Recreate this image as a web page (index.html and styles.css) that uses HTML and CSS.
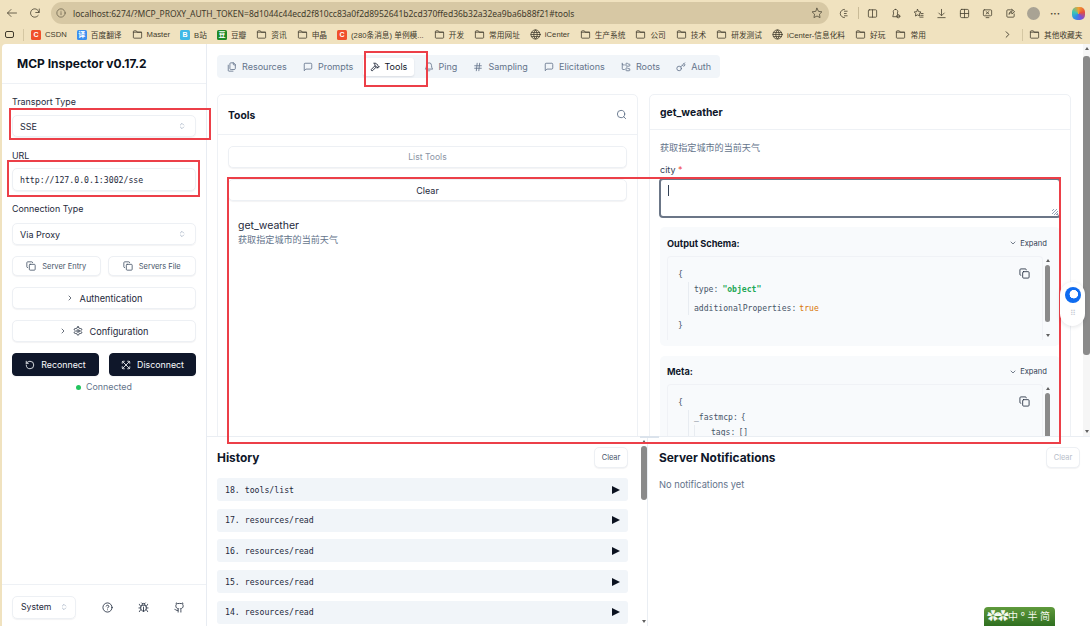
FILE: index.html
```html
<!DOCTYPE html>
<html lang="en">
<head>
<meta charset="utf-8">
<title>MCP Inspector</title>
<link rel="stylesheet" href="styles.css">
</head>
<body>
<svg class="sprite" width="0" height="0" aria-hidden="true">
  <defs>
    <symbol id="copy" viewBox="0 0 24 24"><rect x="8" y="8" width="14" height="14" rx="2"/><path d="M4 16c-1.1 0-2-.9-2-2V4c0-1.1.9-2 2-2h10c1.100 0 2 .9 2 2"/></symbol>
    <symbol id="files" viewBox="0 0 24 24"><path d="M20 7h-3a2 2 0 0 1-2-2V2"/><path d="M9 18a2 2 0 0 1-2-2V4a2 2 0 0 1 2-2h7l4 4v10a2 2 0 0 1-2 2Z"/><path d="M3 7.600v12.800A1.600 1.600 0 0 0 4.600 22h9.800"/></symbol>
    <symbol id="msg" viewBox="0 0 24 24"><path d="M21 15a2 2 0 0 1-2 2H7l-4 4V5a2 2 0 0 1 2-2h14a2 2 0 0 1 2 2z"/></symbol>
    <symbol id="hammer" viewBox="0 0 24 24"><path d="m15 12-8.500 8.500c-.83.83-2.170.83-3 0a2.120 2.120 0 0 1 0-3L12 9"/><path d="M17.640 15 22 10.640"/><path d="m20.910 11.700-1.250-1.250c-.6-.6-.93-1.400-.93-2.250v-.86L16.010 4.600a5.560 5.560 0 0 0-3.940-1.640H9l.92.82A6.180 6.180 0 0 1 12 8.400v1.560l2 2h2.470l2.260 1.910"/></symbol>
    <symbol id="bell" viewBox="0 0 24 24"><path d="M6 8a6 6 0 0 1 12 0c0 7 3 9 3 9H3s3-2 3-9"/><path d="M10.300 21a1.940 1.940 0 0 0 3.400 0"/></symbol>
    <symbol id="hash" viewBox="0 0 24 24"><path d="M4 9h16M4 15h16M10 3 8 21M16 3l-2 18"/></symbol>
    <symbol id="tree" viewBox="0 0 24 24"><path d="M20 10a1 1 0 0 0 1-1V6a1 1 0 0 0-1-1h-2.500a1 1 0 0 1-.8-.4l-.9-1.200A1 1 0 0 0 15 3h-2a1 1 0 0 0-1 1v5a1 1 0 0 0 1 1Z"/><path d="M20 21a1 1 0 0 0 1-1v-3a1 1 0 0 0-1-1h-2.900a1 1 0 0 1-.88-.55l-.42-.85a1 1 0 0 0-.92-.6H13a1 1 0 0 0-1 1v5a1 1 0 0 0 1 1Z"/><path d="M3 5a2 2 0 0 0 2 2h3"/><path d="M3 3v13a2 2 0 0 0 2 2h3"/></symbol>
    <symbol id="key" viewBox="0 0 24 24"><path d="m15.500 7.500 3 3L22 7l-3-3"/><path d="m21 2-9.600 9.600"/><circle cx="7.500" cy="15.500" r="5.500"/></symbol>
    <symbol id="search" viewBox="0 0 24 24"><circle cx="11" cy="11" r="8"/><path d="m21 21-4.300-4.300"/></symbol>
    <symbol id="updown" viewBox="0 0 24 24"><path d="m7 15 5 5 5-5"/><path d="m7 9 5-5 5 5"/></symbol>
    <symbol id="cright" viewBox="0 0 24 24"><path d="m9 18 6-6-6-6"/></symbol>
    <symbol id="cdown" viewBox="0 0 24 24"><path d="m6 9 6 6 6-6"/></symbol>
    <symbol id="gear" viewBox="0 0 24 24"><path d="M12.220 2h-.44a2 2 0 0 0-2 2v.18a2 2 0 0 1-1 1.730l-.43.25a2 2 0 0 1-2 0l-.15-.08a2 2 0 0 0-2.730.73l-.22.38a2 2 0 0 0 .73 2.730l.15.1a2 2 0 0 1 1 1.720v.51a2 2 0 0 1-1 1.740l-.15.09a2 2 0 0 0-.73 2.730l.22.38a2 2 0 0 0 2.730.73l.15-.08a2 2 0 0 1 2 0l.43.25a2 2 0 0 1 1 1.730V20a2 2 0 0 0 2 2h.44a2 2 0 0 0 2-2v-.18a2 2 0 0 1 1-1.730l.43-.25a2 2 0 0 1 2 0l.15.08a2 2 0 0 0 2.730-.73l.22-.39a2 2 0 0 0-.73-2.730l-.15-.08a2 2 0 0 1-1-1.740v-.5a2 2 0 0 1 1-1.740l.15-.09a2 2 0 0 0 .73-2.730l-.22-.38a2 2 0 0 0-2.730-.73l-.15.08a2 2 0 0 1-2 0l-.43-.25a2 2 0 0 1-1-1.730V4a2 2 0 0 0-2-2z"/><circle cx="12" cy="12" r="3"/></symbol>
    <symbol id="ccw" viewBox="0 0 24 24"><path d="M3 12a9 9 0 1 0 9-9 9.750 9.750 0 0 0-6.740 2.740L3 8"/><path d="M3 3v5h5"/></symbol>
    <symbol id="unplug" viewBox="0 0 24 24"><path d="M4 4l16 16M20 4 4 20"/><path d="M8 3H5a2 2 0 0 0-2 2v3M16 3h3a2 2 0 0 1 2 2v3M8 21H5a2 2 0 0 1-2-2v-3M16 21h3a2 2 0 0 0 2-2v-3"/></symbol>
    <symbol id="help" viewBox="0 0 24 24"><circle cx="12" cy="12" r="10"/><path d="M9.090 9a3 3 0 0 1 5.830 1c0 2-3 3-3 3"/><path d="M12 17h.01"/></symbol>
    <symbol id="bug" viewBox="0 0 24 24"><path d="m8 2 1.880 1.880"/><path d="M14.120 3.880 16 2"/><path d="M9 7.130v-1a3 3 0 1 1 6 0v1"/><path d="M12 20c-3.300 0-6-2.700-6-6v-3a4 4 0 0 1 4-4h4a4 4 0 0 1 4 4v3c0 3.300-2.700 6-6 6"/><path d="M12 20v-9"/><path d="M6.530 9C4.600 8.800 3 7.100 3 5"/><path d="M6 13H2"/><path d="M3 21c0-2.100 1.700-3.900 3.800-4"/><path d="M20.970 5c0 2.100-1.600 3.800-3.500 4"/><path d="M22 13h-4"/><path d="M17.200 17c2.100.1 3.800 1.900 3.800 4"/></symbol>
    <symbol id="github" viewBox="0 0 24 24"><path d="M15 22v-4a4.800 4.800 0 0 0-1-3.500c3 0 6-2 6-5.500.08-1.250-.27-2.480-1-3.500.28-1.150.28-2.350 0-3.500 0 0-1 0-3 1.500-2.640-.5-5.360-.5-8 0C6 2 5 2 5 2c-.3 1.150-.3 2.350 0 3.500A5.400 5.400 0 0 0 4 9c0 3.500 3 5.500 6 5.500-.39.49-.68 1.050-.85 1.650-.17.6-.22 1.230-.15 1.850v4"/><path d="M9 18c-4.510 2-5-2-7-2"/></symbol>
    <symbol id="folder" viewBox="0 0 24 24"><path d="M3 7V5.500A1.500 1.500 0 0 1 4.500 4h5l2 3h8A1.500 1.500 0 0 1 21 8.500v10a1.500 1.500 0 0 1-1.500 1.500h-15A1.500 1.500 0 0 1 3 18.500V7h18"/></symbol>
    <symbol id="globe" viewBox="0 0 24 24"><circle cx="12" cy="12" r="10"/><path d="M12 2a14.500 14.500 0 0 0 0 20 14.500 14.500 0 0 0 0-20"/><path d="M2 12h20M3.500 7.500h17M3.500 16.500h17"/></symbol>
    <symbol id="back" viewBox="0 0 24 24"><path d="M21 12H3M10 5l-7 7 7 7"/></symbol>
    <symbol id="reload" viewBox="0 0 24 24"><path d="M20 11a8.500 8.500 0 1 0-1.500 6"/><path d="M20.500 4v7h-7"/></symbol>
    <symbol id="info" viewBox="0 0 24 24"><circle cx="12" cy="12" r="10"/><path d="M12 16v-5M12 8h.01"/></symbol>
    <symbol id="star" viewBox="0 0 24 24"><path d="m12 2.500 3 6.200 6.800 1-4.900 4.700 1.200 6.800-6.100-3.200-6.100 3.200 1.200-6.800-4.900-4.700 6.800-1z"/></symbol>
    <symbol id="split" viewBox="0 0 24 24"><rect x="3" y="4" width="18" height="16" rx="2"/><path d="M12 4v16"/></symbol>
    <symbol id="down" viewBox="0 0 24 24"><path d="M12 3v13M6 11l6 6 6-6M4 21h16"/></symbol>
    <symbol id="grid" viewBox="0 0 24 24"><rect x="3" y="3" width="18" height="18" rx="3"/><path d="M12 3v18M3 12h18"/></symbol>
    <symbol id="shot" viewBox="0 0 24 24"><rect x="3" y="4" width="18" height="13" rx="2"/><path d="M9 21h6M9 8l6 5M15 8l-6 5"/></symbol>
    <symbol id="share" viewBox="0 0 24 24"><path d="M12 4H6a2 2 0 0 0-2 2v12a2 2 0 0 0 2 2h12a2 2 0 0 0 2-2v-5"/><path d="M15 3l6 5-6 5V10c-3 0-5 1-6 4 0-4 2-7 6-7z"/></symbol>
    <symbol id="ext" viewBox="0 0 24 24"><path d="M14 3a9 9 0 1 0 0 18M14 7h6M14 12h4M14 17h6"/></symbol>
    <symbol id="favs" viewBox="0 0 24 24"><path d="m10 3 2.300 5 5.200.7-3.800 3.600 1 5.200-4.700-2.500-4.700 2.500 1-5.200L2.500 8.700 7.700 8z"/><path d="M17 12h5M17 16h5M15 20h7"/></symbol>
    <symbol id="lock" viewBox="0 0 24 24"><path d="M12 3a5 5 0 0 1 4 8l2 8H6l2-8a5 5 0 0 1 4-8z"/><circle cx="18" cy="18" r="3.500"/></symbol>
  </defs>
</svg>

<header class="toolbar">
  <svg class="tb-nav"><use href="#back"/></svg>
  <svg class="tb-nav"><use href="#reload"/></svg>
  <div class="address">
    <svg class="addr-info"><use href="#info"/></svg>
    <span class="addr-text">localhost:6274/?MCP_PROXY_AUTH_TOKEN=8d1044c44ecd2f810cc83a0f2d8952641b2cd370ffed36b32a32ea9ba6b88f21#tools</span>
    <svg class="addr-star"><use href="#star"/></svg>
  </div>
  <div class="tb-icons">
    <svg class="tb-ic"><use href="#ext"/></svg>
    <i class="tb-sep"></i>
    <svg class="tb-ic"><use href="#split"/></svg>
    <svg class="tb-ic"><use href="#lock"/></svg>
    <svg class="tb-ic"><use href="#favs"/></svg>
    <svg class="tb-ic"><use href="#down"/></svg>
    <svg class="tb-ic"><use href="#grid"/></svg>
    <svg class="tb-ic"><use href="#shot"/></svg>
    <svg class="tb-ic"><use href="#share"/></svg>
    <span class="avatar"></span>
    <span class="dots">···</span>
    <span class="copilot"></span>
  </div>
</header>

<nav class="bookmarks">
  <span class="bm-first"></span>
  <i class="bm-sep"></i>
  <a class="bm"><b class="fav fav-red">C</b>CSDN</a>
  <a class="bm"><b class="fav fav-blue">译</b>百度翻译</a>
  <a class="bm"><svg class="bm-ic"><use href="#folder"/></svg>Master</a>
  <a class="bm"><b class="fav fav-cyan">B</b>B站</a>
  <a class="bm"><b class="fav fav-green">豆</b>豆瓣</a>
  <a class="bm"><svg class="bm-ic"><use href="#folder"/></svg>资讯</a>
  <a class="bm"><svg class="bm-ic"><use href="#folder"/></svg>申晶</a>
  <a class="bm bm-wide"><b class="fav fav-red">C</b>(280条消息) 单例模...</a>
  <a class="bm"><svg class="bm-ic"><use href="#folder"/></svg>开发</a>
  <a class="bm"><svg class="bm-ic"><use href="#folder"/></svg>常用网址</a>
  <a class="bm"><svg class="bm-ic"><use href="#globe"/></svg>iCenter</a>
  <a class="bm"><svg class="bm-ic"><use href="#folder"/></svg>生产系统</a>
  <a class="bm"><svg class="bm-ic"><use href="#folder"/></svg>公司</a>
  <a class="bm"><svg class="bm-ic"><use href="#folder"/></svg>技术</a>
  <a class="bm"><svg class="bm-ic"><use href="#folder"/></svg>研发测试</a>
  <a class="bm"><svg class="bm-ic"><use href="#globe"/></svg>iCenter-信息化料</a>
  <a class="bm"><svg class="bm-ic"><use href="#folder"/></svg>好玩</a>
  <a class="bm"><svg class="bm-ic"><use href="#folder"/></svg>常用</a>
  <span class="bm-end">
    <svg class="bm-more"><use href="#cright"/></svg>
    <i class="bm-sep"></i>
    <a class="bm"><svg class="bm-ic"><use href="#folder"/></svg>其他收藏夹</a>
  </span>
</nav>

<div class="app">
  <aside class="sidebar">
    <div class="side-head"><h1>MCP Inspector v0.17.2</h1></div>
    <div class="side-body">
      <div class="field f1">
        <label>Transport Type</label>
        <div class="control"><span>SSE</span><svg class="updown"><use href="#updown"/></svg></div>
      </div>
      <div class="field f2">
        <label>URL</label>
        <div class="control mono"><span>http://127.0.0.1:3002/sse</span></div>
      </div>
      <div class="field f3">
        <label>Connection Type</label>
        <div class="control"><span>Via Proxy</span><svg class="updown"><use href="#updown"/></svg></div>
      </div>
      <div class="two">
        <button class="btn sm"><svg class="ic"><use href="#copy"/></svg>Server Entry</button>
        <button class="btn sm"><svg class="ic"><use href="#copy"/></svg>Servers File</button>
      </div>
      <button class="btn wide"><svg class="ic chev"><use href="#cright"/></svg>Authentication</button>
      <button class="btn wide tall"><svg class="ic chev"><use href="#cright"/></svg><svg class="ic"><use href="#gear"/></svg>Configuration</button>
      <div class="two dark-row">
        <button class="btn dark"><svg class="ic"><use href="#ccw"/></svg>Reconnect</button>
        <button class="btn dark"><svg class="ic"><use href="#unplug"/></svg>Disconnect</button>
      </div>
      <div class="status"><i class="dot"></i>Connected</div>
    </div>
    <div class="side-foot">
      <div class="theme"><span>System</span><svg class="updown"><use href="#updown"/></svg></div>
      <svg class="foot-ic"><use href="#help"/></svg>
      <svg class="foot-ic"><use href="#bug"/></svg>
      <svg class="foot-ic"><use href="#github"/></svg>
    </div>
  </aside>

  <main class="main">
    <section class="upper">
      <div class="upper-content">
        <div class="tabs">
          <a class="tab"><svg class="ic"><use href="#files"/></svg>Resources</a>
          <a class="tab"><svg class="ic"><use href="#msg"/></svg>Prompts</a>
          <a class="tab active"><svg class="ic"><use href="#hammer"/></svg>Tools</a>
          <a class="tab"><svg class="ic"><use href="#bell"/></svg>Ping</a>
          <a class="tab"><svg class="ic"><use href="#hash"/></svg>Sampling</a>
          <a class="tab"><svg class="ic"><use href="#msg"/></svg>Elicitations</a>
          <a class="tab"><svg class="ic"><use href="#tree"/></svg>Roots</a>
          <a class="tab"><svg class="ic"><use href="#key"/></svg>Auth</a>
        </div>
        <div class="cols">
          <div class="card tools-card">
            <div class="card-head tools-head"><h2>Tools</h2><svg class="search"><use href="#search"/></svg></div>
            <div class="tools-body">
              <button class="btn block muted">List Tools</button>
              <button class="btn block">Clear</button>
              <div class="tool-item">
                <div class="tool-name">get_weather</div>
                <div class="tool-desc">获取指定城市的当前天气</div>
              </div>
            </div>
          </div>
          <div class="card detail-card">
            <div class="card-head detail-head"><h2>get_weather</h2></div>
            <div class="detail-body">
              <p class="detail-desc">获取指定城市的当前天气</p>
              <div class="city">city <em>*</em></div>
              <div class="textarea"><i class="caret"></i><span class="grip"></span></div>
              <div class="schema">
                <div class="schema-head"><strong>Output Schema:</strong><span class="expand"><svg class="ic"><use href="#cdown"/></svg>Expand</span></div>
                <div class="code-wrap">
                  <div class="code">
                    <svg class="code-copy"><use href="#copy"/></svg>
                    <div class="ln">{</div>
                    <div class="guide">
                      <div class="ln ln-a">type:<span class="str">"object"</span></div>
                      <div class="ln ln-b">additionalProperties:<span class="bool">true</span></div>
                    </div>
                    <div class="ln ln-end">}</div>
                  </div>
                  <div class="sbar"><i class="up"></i><i class="thumb t1"></i><i class="dn"></i></div>
                </div>
              </div>
              <div class="schema meta">
                <div class="schema-head"><strong>Meta:</strong><span class="expand"><svg class="ic"><use href="#cdown"/></svg>Expand</span></div>
                <div class="code-wrap">
                  <div class="code">
                    <svg class="code-copy"><use href="#copy"/></svg>
                    <div class="ln">{</div>
                    <div class="guide">
                      <div class="ln ln-a">_fastmcp:<span class="pun">{</span></div>
                      <div class="guide guide2"><div class="ln ln-c">tags:<span class="pun">[]</span></div></div>
                    </div>
                  </div>
                  <div class="sbar"><i class="up"></i><i class="thumb t2"></i></div>
                </div>
              </div>
            </div>
          </div>
        </div>
      </div>
      <div class="sbar page-bar"><i class="up"></i><i class="thumb t3"></i><i class="dn"></i></div>
    </section>

    <section class="lower">
      <i class="splitter"></i>
      <div class="history">
        <div class="lower-head"><h3>History</h3><button class="btn clear">Clear</button></div>
        <div class="hist-row"><span>18. tools/list</span><i class="play"></i></div>
        <div class="hist-row"><span>17. resources/read</span><i class="play"></i></div>
        <div class="hist-row"><span>16. resources/read</span><i class="play"></i></div>
        <div class="hist-row"><span>15. resources/read</span><i class="play"></i></div>
        <div class="hist-row"><span>14. resources/read</span><i class="play"></i></div>
      </div>
      <div class="sbar hist-bar"><i class="up"></i><i class="thumb t4"></i><i class="dn"></i></div>
      <div class="notes">
        <div class="lower-head"><h3>Server Notifications</h3><button class="btn clear faded">Clear</button></div>
        <p class="empty">No notifications yet</p>
      </div>
    </section>
  </main>
</div>

<div class="red r-tab"></div>
<div class="red r-sse"></div>
<div class="red r-url"></div>
<div class="red r-main"></div>

<div class="float-widget"><span class="fw-logo"></span><span class="fw-grip">⠿</span></div>
<div class="ime"><span class="ime-flower">✿✿</span><span class="ime-text">中°半简</span></div>
</body>
</html>
```
FILE: styles.css
```css
* { box-sizing: border-box; }
html, body { margin: 0; height: 626px; overflow: hidden; }
body {
  position: relative;
  width: 1090px;
  background: #f0e2bf;
  font-family: Inter, "Noto Sans CJK SC", sans-serif;
  color: #0f172a;
  font-size: 10px;
}
svg { fill: none; stroke: currentColor; stroke-width: 2; stroke-linecap: round; stroke-linejoin: round; }
.sprite { position: absolute; }
h1, h2, h3, p { margin: 0; }
button { font-family: inherit; }

/* browser chrome */
.toolbar { height: 25px; display: flex; align-items: center; padding: 1px 0 0 6px; color: #4a4433; }
.tb-nav { width: 12px; height: 12px; margin-right: 11px; stroke-width: 1.6; }
.address {
  width: 778px; height: 22px; margin-left: -1px; border-radius: 11px; background: #d7c8a4;
  display: flex; align-items: center; padding-left: 5px;
}
.addr-info { width: 10px; height: 10px; stroke-width: 1.6; color: #5a5340; }
.addr-text { margin-left: 7px; font: 8.5px "Noto Sans", sans-serif; color: #3f3a2c; white-space: nowrap; }
.addr-star { width: 12px; height: 12px; margin-left: auto; margin-right: 6px; stroke-width: 1.5; }
.tb-icons { display: flex; align-items: center; flex: 1; padding-left: 9px; }
.tb-ic { width: 11px; height: 11px; margin-right: 12px; stroke-width: 1.8; flex: none; }
.tb-sep { width: 1px; height: 12px; background: #c9bb97; margin: 0 8px 0 -3px; }
.avatar { width: 13px; height: 13px; border-radius: 50%; background: #a9a394; margin-left: -1px; }
.dots { margin-left: 10px; font-weight: 700; font-size: 10px; }
.copilot {
  width: 13px; height: 13px; margin-left: 12px; border-radius: 5px;
  background: conic-gradient(#f0a030, #e8503a, #7a4fd8, #2f8be8, #3cc8b0, #f0a030);
}
.bookmarks {
  height: 19px; display: flex; align-items: center; padding-left: 5px; gap: 10px;
  font: 7.7px "Liberation Sans", "Noto Sans CJK SC", sans-serif; color: #3f3a2c; white-space: nowrap;
}
.bm-first { width: 9px; height: 7px; border: 1.5px solid #3f3a2c; border-radius: 2px; margin-right: -1px; }
.bm-sep { width: 1px; height: 12px; background: #d5c7a3; margin-right: -3px; }
.bm { display: inline-flex; align-items: center; gap: 4px; }
.fav {
  width: 10px; height: 10px; border-radius: 1.5px; font-size: 7px; line-height: 10px; text-align: center;
  color: #fff; font-weight: 700; font-style: normal; flex: none;
}
.fav-red { background: #f0502c; }
.fav-blue { background: #3b8ff0; }
.fav-cyan { background: #3fb8e6; }
.fav-green { background: #1f8a28; }
.bm-ic { width: 11px; height: 11px; stroke-width: 1.7; flex: none; }
.bm-end { position: absolute; left: 1002px; display: flex; align-items: center; gap: 9px; }
.bm-more { width: 11px; height: 11px; }

/* app */
.app { height: 582px; margin-left: 2px; display: flex; background: #fff; border-top-left-radius: 4px; }
.sidebar { width: 205px; border-right: 1px solid #e8ecf2; display: flex; flex-direction: column; flex: none; }
.side-head { height: 40px; border-bottom: 1px solid #eef1f5; padding: 12px 0 0 15px; }
h1 { font-size: 12px; font-weight: 700; line-height: 15px; color: #0b1220; }
.side-body { padding: 12px 10px 0; flex: 1; }
label { display: block; font-size: 8.9px; line-height: 12px; color: #1e293b; margin-bottom: 7px; }
.control {
  height: 22px; border: 1px solid #edf0f4; border-radius: 5px; box-shadow: 0 1px 1px rgba(15,23,42,.05);
  display: flex; align-items: center; justify-content: space-between; padding: 0 9px 0 7px;
  font-size: 9px; color: #1e293b;
}
.control.mono { height: 23px; font: 8.2px "DejaVu Sans Mono", monospace; }
.updown { width: 8px; height: 8px; color: #94a3b8; }
.f1 { margin-bottom: 13px; }
.f2 { margin-bottom: 12px; }
.f2 label { margin-bottom: 6px; }
.f3 { margin-bottom: 11px; }
.f3 label { margin-bottom: 8px; }
.btn {
  background: #fff; border: 1px solid #edf0f4; border-radius: 5px; box-shadow: 0 1px 1px rgba(15,23,42,.05);
  display: flex; align-items: center; justify-content: center; gap: 5px; padding: 0; color: #1e293b;
  font-size: 9.2px;
}
.ic { width: 10px; height: 10px; flex: none; }
.two { display: flex; gap: 7px; margin-bottom: 11px; }
.btn.sm { flex: 1; height: 20px; font-size: 7.5px; color: #475569; gap: 6px; }
.btn.wide { width: 100%; height: 22px; margin-bottom: 11px; gap: 6px; }
.ic.chev { width: 8px; height: 8px; }
.dark-row { gap: 10px; margin-bottom: 5px; }
.btn.dark {
  flex: 1; height: 23px; background: #0f172a; border-color: #0f172a; color: #f8fafc; gap: 6px; border-radius: 4px;
  font-size: 8.8px;
}
.btn.dark .ic { width: 10px; height: 10px; }
.status { display: flex; justify-content: center; align-items: center; gap: 5px; font-size: 8.9px; line-height: 12px; color: #64748b; }
.dot { width: 5px; height: 5px; border-radius: 50%; background: #22c55e; }
.side-foot { height: 42px; border-top: 1px solid #eef1f5; display: flex; align-items: center; padding: 3px 0 0 10px; color: #1e293b; }
.theme {
  width: 64px; height: 23px; border: 1px solid #edf0f4; border-radius: 5px; box-shadow: 0 1px 1px rgba(15,23,42,.05);
  display: flex; align-items: center; justify-content: space-between; padding: 0 7px 0 8px; font-size: 8.7px;
  margin-right: 26px; flex: none;
}
.foot-ic { width: 11px; height: 11px; margin-right: 25px; stroke-width: 1.8; flex: none; }

.main { flex: 1; min-width: 0; display: flex; flex-direction: column; }
.upper { height: 392px; display: flex; overflow: hidden; }
.upper-content { width: 876px; padding: 11px 0 0 10px; flex: none; }
.tabs {
  width: 503px; height: 23px; background: #f1f5f9; border-radius: 4px; display: flex; align-items: center;
  padding: 0 2px 0 3px; justify-content: space-between; color: #64748b; font-size: 9px;
}
.tab { display: flex; align-items: center; gap: 5px; height: 18px; padding: 0 7px; border-radius: 3px; }
.tab .ic { width: 10px; height: 10px; }
.tab.active { background: #fff; color: #0f172a; box-shadow: 0 1px 2px rgba(15,23,42,.1); }
.cols { display: flex; gap: 11px; margin-top: 16px; }
.card { border: 1px solid #eef1f5; border-radius: 5px; height: 350px; flex: none; overflow: hidden; }
.tools-card { width: 421px; }
.detail-card { width: 422px; }
.card-head { display: flex; align-items: center; justify-content: space-between; border-bottom: 1px solid #eef1f5; padding: 0 10px; }
.tools-head { height: 40px; }
.detail-head { height: 35px; }
h2 { font-size: 10.3px; font-weight: 700; color: #0f172a; }
.search { width: 11px; height: 11px; color: #64748b; }
.tools-body { padding: 11px 10px; }
.btn.block { width: 100%; height: 22px; margin-bottom: 11px; font-size: 9px; }
.btn.muted { color: #8b95a5; font-size: 8.6px; }
.tool-item { padding: 6px 10px; }
.tool-name { font-size: 10.5px; line-height: 15px; color: #1e293b; }
.tool-desc { font-size: 9.1px; line-height: 13px; color: #64748b; }
.detail-body { padding: 11px 10px; }
.detail-desc { font-size: 9.1px; line-height: 13px; color: #64748b; }
.city { font-size: 9px; line-height: 12px; margin-top: 10px; color: #334155; }
.city em { color: #ef4444; font-style: normal; }
.textarea {
  position: relative; height: 40px; margin: 2px -1px 0; border: 2px solid #6b7687; border-radius: 4px; padding: 5px 7px;
}
.caret { display: block; width: 1px; height: 11px; background: #334155; }
.grip {
  position: absolute; right: 1px; bottom: 1px; width: 6px; height: 6px;
  background: repeating-linear-gradient(135deg, transparent 0 1px, #94a3b8 1px 2px);
}
.schema { background: #f8fafc; border-radius: 5px; margin-top: 9px; height: 119px; padding: 0 8px 0 7px; }
.meta { margin-top: 10px; height: 100px; }
.schema-head { height: 29px; display: flex; align-items: center; justify-content: space-between; font-size: 9.2px; padding-top: 3px; }
.meta .schema-head { height: 28px; }
.schema-head strong { color: #0f172a; font-weight: 700; }
.expand { display: inline-flex; align-items: center; gap: 3px; font-size: 7.6px; color: #334155; padding-right: 5px; }
.expand .ic { width: 8px; height: 8px; }
.code-wrap { display: flex; gap: 1px; height: 84px; }
.code {
  position: relative; width: 376px; border: 1px solid #f0f2f6; border-bottom: 0; border-radius: 4px 4px 0 0; padding: 10px 0 0 10px;
  font: 8.1px/14px "DejaVu Sans Mono", monospace; color: #475569;
}
.code-copy { position: absolute; right: 12px; top: 11px; width: 11px; height: 11px; color: #1e293b; stroke-width: 1.8; }
.guide { margin-left: 10px; padding-left: 5px; border-left: 1px solid #e8ecf1; }
.ln-a { margin-top: 1px; }
.ln-b { margin-top: 5px; }
.ln-c { margin-top: 1px; }
.ln-end { margin-top: 3px; }
.guide2 { margin-left: 0; padding-left: 16px; }
.str { color: #22a855; font-weight: 700; margin-left: 4px; }
.bool { color: #d97706; margin-left: 3px; }
.pun { margin-left: 3px; }
.sbar { display: flex; flex-direction: column; align-items: center; width: 7px; flex: none; }
.sbar .up { width: 0; height: 0; border: 2.5px solid transparent; border-top: 0; border-bottom: 3px solid #606060; margin: 3px 0 3px; }
.sbar .dn { width: 0; height: 0; border: 2.5px solid transparent; border-bottom: 0; border-top: 3px solid #606060; margin-top: auto; margin-bottom: 3px; }
.thumb { width: 5px; background: #8a8a8a; border-radius: 3px; }
.t1 { height: 57px; }
.t2 { height: 50px; }
.t3 { width: 7px; height: 299px; margin-top: 3px; }
.t4 { height: 54px; width: 6px; }
.page-bar { background: #f6f6f6; }
.lower { position: relative; height: 190px; display: flex; border-top: 1px solid #eaeef3; }
.splitter { position: absolute; left: 433px; top: -1px; width: 19px; height: 2px; background: #dbe3ec; }
.history { width: 433px; padding-left: 10px; flex: none; }
.lower-head { height: 41px; display: flex; align-items: center; justify-content: space-between; }
h3 { font-size: 11.9px; font-weight: 700; color: #0f172a; }
.btn.clear { width: 34px; height: 21px; font-size: 7.4px; color: #475569; }
.btn.faded { color: #b6bdc9; }
.history .lower-head { width: 411px; }
.hist-row {
  width: 411px; height: 23px; background: #f1f5f9; border-radius: 3px; margin-bottom: 7.7px;
  display: flex; align-items: center; justify-content: space-between; padding: 0 8px;
  font: 8.2px "DejaVu Sans Mono", monospace; color: #1e293b;
}
.play { width: 0; height: 0; border-style: solid; border-width: 4.5px 0 4.5px 8px; border-color: transparent transparent transparent #0b1220; }
.hist-bar { width: 8px; border-right: 1px solid #eaeef3; }
.notes { flex: 1; padding: 0 10px 0 11px; }
.notes .lower-head { width: 421px; }
.empty { font-size: 9.3px; color: #64748b; margin-top: 1px; }

/* annotations and floating items */
.red { position: absolute; border: 2px solid #ec3f48; pointer-events: none; }
.r-tab { left: 364px; top: 51px; width: 64px; height: 36px; }
.r-sse { left: 9px; top: 108px; width: 202px; height: 32px; }
.r-url { left: 7px; top: 160px; width: 193px; height: 37px; }
.r-main { left: 227px; top: 177px; width: 834px; height: 267px; }
.float-widget {
  position: absolute; left: 1060px; top: 282px; width: 25px; height: 44px; border-radius: 13px; background: #fff;
  box-shadow: 0 1px 4px rgba(15,23,42,.12); display: flex; flex-direction: column; align-items: center; padding-top: 5px;
}
.fw-logo { width: 16px; height: 16px; border-radius: 50%; background: radial-gradient(circle at 55% 45%, #fff 0 4px, #0f6cf0 4.5px); }
.fw-grip { font-size: 8px; line-height: 14px; margin-top: 3px; color: #c5cad3; }
.ime {
  position: absolute; left: 984px; top: 607px; width: 71px; height: 19px; border-radius: 4px 4px 0 0;
  background: linear-gradient(#5f9a3c, #2f6f20); color: #f4f8ee; font-size: 10px; line-height: 19px;
  display: flex; padding-left: 3px; white-space: nowrap; box-shadow: 0 0 0 2px #fff;
}
.ime-flower { font-size: 12px; letter-spacing: -2px; width: 21px; }
.ime-text { letter-spacing: 2.5px; }
```
